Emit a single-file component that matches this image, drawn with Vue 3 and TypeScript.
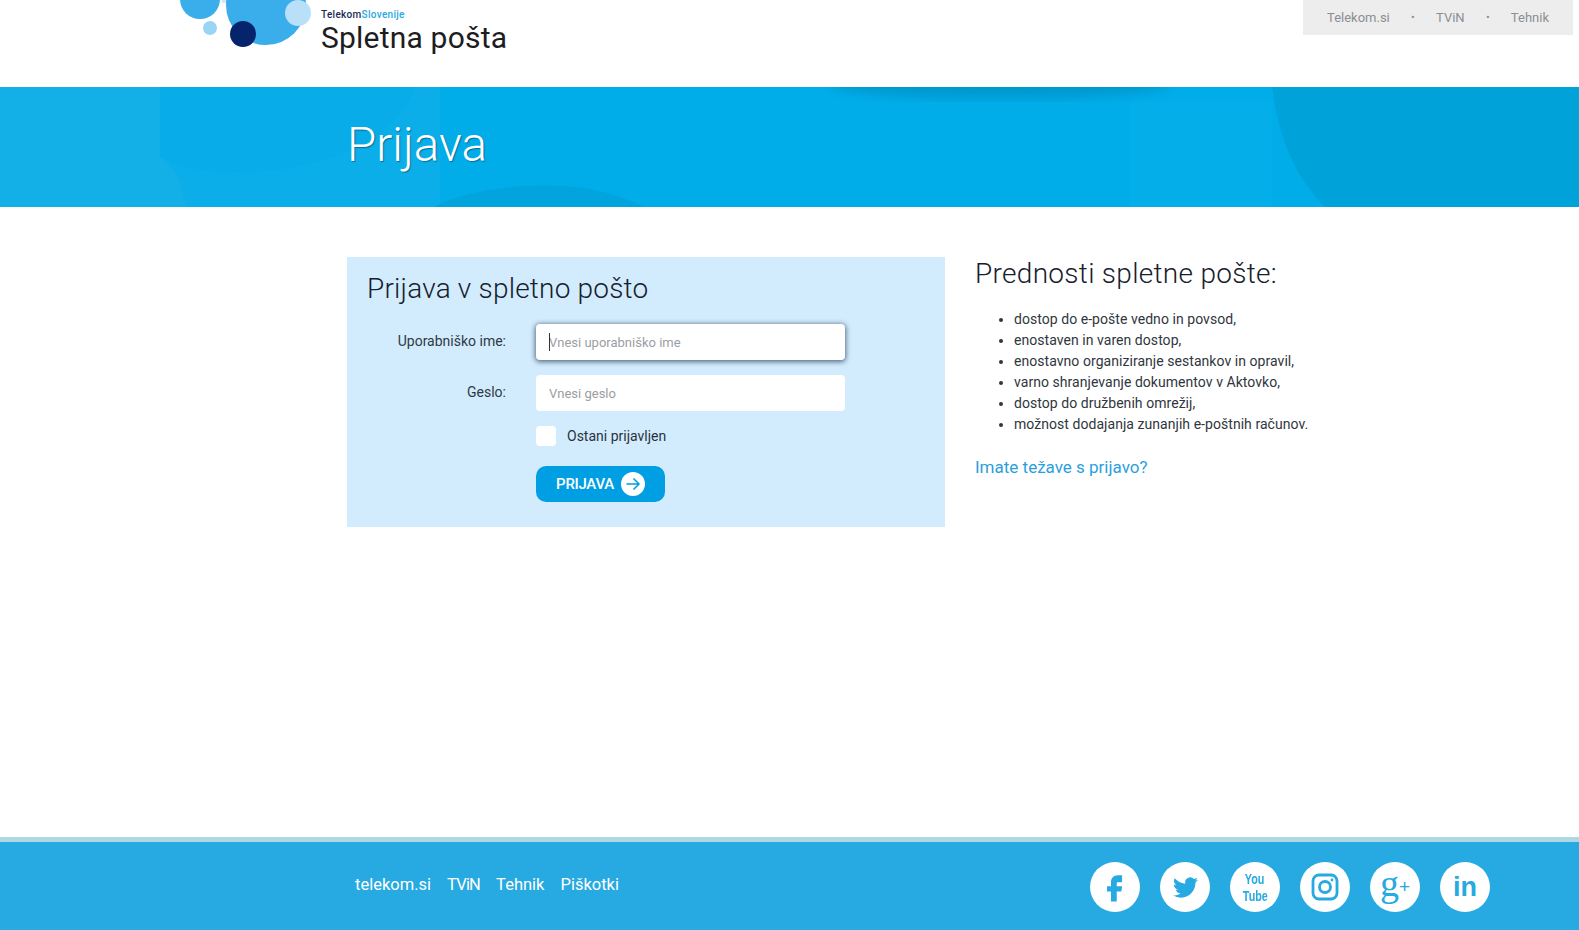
<template>
  <div class="page">
    <header class="top">
      <div class="brand">
        <svg class="logo-mark" width="134" height="50" viewBox="0 0 134 50" aria-hidden="true">
          <circle cx="20" cy="-1" r="20" fill="#39aeea" />
          <rect x="42" y="0" width="6" height="3" fill="#cfe9fa" />
          <circle cx="30" cy="28" r="7" fill="#9ad5f6" />
          <circle cx="86" cy="5" r="40" fill="#39aeea" />
          <circle cx="118" cy="13" r="13" fill="#b9e0f9" />
          <circle cx="63" cy="34" r="13" fill="#06246b" />
        </svg>
        <div class="brand-text">
          <div class="brand-small"><span class="brand-dark">Telekom</span><span class="brand-blue">Slovenije</span></div>
          <div class="brand-name">Spletna pošta</div>
        </div>
      </div>
      <nav class="top-nav">
        <template v-for="(link, i) in topLinks" :key="link">
          <span v-if="i > 0" class="top-dot">•</span>
          <a class="top-link">{{ link }}</a>
        </template>
      </nav>
    </header>

    <section class="banner">
      <svg class="banner-bg" width="1579" height="120" viewBox="0 0 1579 120" aria-hidden="true">
        <defs>
          <filter id="blur"><feGaussianBlur stdDeviation="6" /></filter>
        </defs>
        <rect x="0" y="0" width="440" height="120" fill="#0baee8" />
        <path d="M160 0H414C404 40 345 85 232 85C200 85 175 78 160 70Z" fill="#07ace8" />
        <path d="M160 70C172 78 180 88 186 120H0V0H160Z" fill="#13afe7" />
        <path d="M434 120C470 100 540 94 590 102C615 107 630 113 645 120Z" fill="#02a4de" />
        <path d="M1272 0C1278 50 1295 90 1325 120H1579V0Z" fill="#00a2da" />
        <rect x="1130" y="14" width="142" height="106" fill="#03aee9" />
        <ellipse cx="1000" cy="-3" rx="170" ry="15" fill="#0190c4" opacity="0.7" filter="url(#blur)" />
      </svg>
      <h1 class="banner-title">Prijava</h1>
    </section>

    <main class="content">
      <form class="login" @submit.prevent>
        <h2 class="login-title">Prijava v spletno pošto</h2>
        <div class="fields">
          <label class="field-label">Uporabniško ime:</label>
          <div class="input-wrap">
            <input class="field-input focused" type="text" placeholder="Vnesi uporabniško ime" />
            <span class="caret"></span>
          </div>
          <label class="field-label">Geslo:</label>
          <input class="field-input" type="password" placeholder="Vnesi geslo" />
          <span></span>
          <label class="remember">
            <span class="check"></span>
            Ostani prijavljen
          </label>
          <span></span>
          <button class="submit" type="submit">
            PRIJAVA
            <svg width="24" height="24" viewBox="0 0 24 24" aria-hidden="true">
              <circle cx="12" cy="12" r="12" fill="#fff" />
              <path d="M5.500 12H18M12.500 6.500L18 12L12.500 17.500" fill="none" stroke="#009fe3" stroke-width="1.500" />
            </svg>
          </button>
        </div>
      </form>

      <aside class="benefits">
        <h2 class="benefits-title">Prednosti spletne pošte:</h2>
        <ul class="benefits-list">
          <li v-for="item in benefits" :key="item">{{ item }}</li>
        </ul>
        <a class="help">Imate težave s prijavo?</a>
      </aside>
    </main>

    <footer class="foot">
      <nav class="foot-links">
        <a v-for="link in footLinks" :key="link">{{ link }}</a>
      </nav>
      <div class="social">
        <a class="social-item">
          <svg width="32" height="32" viewBox="0 0 24 24"><path d="M14 8.500h3.300V3.200H14c-2.900 0-5 2.100-5 5v3.200H6v3.900h3v7.500h4.300v-7.500h3.400l.7-3.900h-4.100V9.500c0-.6.200-1 .7-1z" fill="#27a9e1" /></svg>
        </a>
        <a class="social-item">
          <svg width="25" height="25" viewBox="0 0 24 24"><path d="M23.953 4.570a10 10 0 01-2.825.775 4.958 4.958 0 002.163-2.723c-.951.555-2.005.959-3.127 1.184a4.920 4.920 0 00-8.384 4.482C7.690 8.095 4.067 6.130 1.640 3.162a4.822 4.822 0 00-.666 2.475c0 1.710.870 3.213 2.188 4.096a4.904 4.904 0 01-2.228-.616v.060a4.923 4.923 0 003.946 4.827 4.996 4.996 0 01-2.212.085 4.936 4.936 0 004.604 3.417 9.867 9.867 0 01-6.102 2.105c-.390 0-.779-.023-1.170-.067a13.995 13.995 0 007.557 2.209c9.053 0 13.998-7.496 13.998-13.985 0-.210 0-.420-.015-.630A9.935 9.935 0 0024 4.590z" fill="#27a9e1" /></svg>
        </a>
        <a class="social-item yt"><span>You</span><span>Tube</span></a>
        <a class="social-item">
          <svg width="30" height="30" viewBox="0 0 30 30" fill="none" stroke="#27a9e1" stroke-width="2.800">
            <rect x="3" y="3" width="24" height="24" rx="6" />
            <circle cx="15" cy="15" r="5.500" />
            <circle cx="22" cy="8" r="1.400" fill="#27a9e1" stroke="none" />
          </svg>
        </a>
        <a class="social-item gplus"><span class="g">g</span><span class="plus">+</span></a>
        <a class="social-item in">in</a>
      </div>
    </footer>
  </div>
</template>

<script setup lang="ts">
const topLinks = ['Telekom.si', 'TViN', 'Tehnik']
const footLinks = ['telekom.si', 'TViN', 'Tehnik', 'Piškotki']
const benefits = [
  'dostop do e-pošte vedno in povsod,',
  'enostaven in varen dostop,',
  'enostavno organiziranje sestankov in opravil,',
  'varno shranjevanje dokumentov v Aktovko,',
  'dostop do družbenih omrežij,',
  'možnost dodajanja zunanjih e-poštnih računov.',
]
</script>

<style>
html,
body {
  margin: 0;
  background: #fff;
}
</style>

<style scoped>
.page {
  min-height: 930px;
  display: flex;
  flex-direction: column;
  font-family: Roboto, 'Liberation Sans', sans-serif;
  color: #1d2530;
  overflow: hidden;
}

.top {
  height: 87px;
  display: flex;
  justify-content: space-between;
  align-items: flex-start;
  padding: 0 6px 0 180px;
}

.brand {
  display: flex;
  gap: 7px;
}

.logo-mark {
  display: block;
}

.brand-text {
  padding-top: 8px;
}

.brand-small {
  font-size: 10px;
  line-height: 13px;
  font-weight: 500;
  letter-spacing: 0.3px;
}

.brand-dark {
  color: #1b2a55;
}

.brand-blue {
  color: #27a9e1;
}

.brand-name {
  font-size: 30px;
  line-height: 33px;
  color: #1d1d1f;
  letter-spacing: 0.2px;
}

.top-nav {
  height: 35px;
  width: 270px;
  box-sizing: border-box;
  background: #ededed;
  display: flex;
  align-items: center;
  justify-content: space-between;
  padding: 0 24px;
  font-size: 13px;
  color: #8b8f94;
}

.top-dot {
  font-size: 11px;
}

.banner {
  position: relative;
  height: 120px;
  box-sizing: border-box;
  background: #00ade9;
  overflow: hidden;
  padding: 0 0 5px 347px;
  display: flex;
  align-items: center;
}

.banner-bg {
  position: absolute;
  left: 0;
  top: 0;
}

.banner-title {
  position: relative;
  margin: 0;
  font-size: 47.500px;
  font-weight: 300;
  color: #fff;
  text-shadow: 1px 1px 1px rgba(0, 60, 100, 0.55);
}

.content {
  flex: 1;
  display: flex;
  align-items: flex-start;
  gap: 30px;
  padding: 50px 0 0 347px;
}

.login {
  width: 598px;
  height: 270px;
  box-sizing: border-box;
  background: #d2ecfd;
  padding: 15px 20px 0;
}

.login-title {
  margin: 0 0 18px;
  font-size: 28px;
  line-height: 34px;
  font-weight: 300;
  letter-spacing: 0.2px;
  color: #16202c;
}

.fields {
  display: grid;
  grid-template-columns: 139px 309px;
  column-gap: 30px;
  align-items: center;
}

.field-label {
  text-align: right;
  font-size: 14px;
  color: #2f3945;
  margin-bottom: 17px;
}

.input-wrap {
  position: relative;
  height: 36px;
  margin-bottom: 15px;
}

.field-input {
  display: block;
  width: 100%;
  height: 36px;
  box-sizing: border-box;
  border: none;
  outline: none;
  border-radius: 4px;
  background: #fff;
  padding: 0 13px;
  margin-bottom: 15px;
  font: 13px Roboto, sans-serif;
}

.input-wrap .field-input {
  margin-bottom: 0;
}

.field-input::placeholder {
  color: #9a9ea3;
  opacity: 1;
}

.focused {
  box-shadow: 0 1px 5px 1px rgba(20, 40, 70, 0.65);
}

.caret {
  position: absolute;
  left: 13px;
  top: 9px;
  width: 1px;
  height: 18px;
  background: #333;
}

.remember {
  display: flex;
  align-items: center;
  gap: 11px;
  font-size: 14px;
  color: #28323e;
  height: 20px;
  margin-bottom: 20px;
}

.check {
  width: 20px;
  height: 20px;
  border-radius: 4px;
  background: #fff;
}

.submit {
  width: 129px;
  height: 36px;
  border: none;
  border-radius: 10px;
  background: #009fe3;
  color: #fff;
  display: flex;
  align-items: center;
  justify-content: center;
  gap: 7px;
  font: 500 15px Roboto, sans-serif;
  letter-spacing: -0.3px;
  padding: 0;
}

.benefits {
  width: 400px;
}

.benefits-title {
  margin: 0;
  font-size: 28px;
  line-height: 34px;
  font-weight: 300;
  letter-spacing: 0.3px;
  color: #16202c;
}

.benefits-list {
  margin: 18px 0 0;
  padding: 0 0 0 39px;
  list-style: disc;
  font-size: 14px;
  line-height: 21px;
  letter-spacing: 0.05px;
  color: #30363d;
}

.help {
  display: block;
  margin-top: 20px;
  font-size: 17px;
  line-height: 24px;
  color: #2b9fdc;
}

.foot {
  height: 93px;
  box-sizing: border-box;
  border-top: 5px solid #add8e6;
  background: #27a9e1;
  display: flex;
  justify-content: space-between;
  align-items: center;
  padding: 0 89px 0 355px;
  color: #fff;
}

.foot-links {
  display: flex;
  gap: 16px;
  font-size: 16.500px;
  margin-bottom: 4px;
}

.foot-links a:nth-child(2) {
  letter-spacing: -0.8px;
}

.social {
  display: flex;
  gap: 20px;
  margin-top: 2px;
}

.social-item {
  width: 50px;
  height: 50px;
  border-radius: 50%;
  background: #fff;
  color: #27a9e1;
  display: flex;
  align-items: center;
  justify-content: center;
}

.yt {
  flex-direction: column;
  font: 700 15px/17.500px 'Liberation Sans', sans-serif;
}

.yt span {
  display: block;
  transform: scaleX(0.72);
}

.gplus {
  font-family: 'Liberation Serif', serif;
}

.g {
  font-size: 38px;
  line-height: 40px;
  margin-top: -8px;
}

.plus {
  font-size: 19px;
  line-height: 20px;
  font-family: 'Liberation Sans', sans-serif;
}

.in {
  font: 700 27px 'Liberation Sans', sans-serif;
}
</style>
